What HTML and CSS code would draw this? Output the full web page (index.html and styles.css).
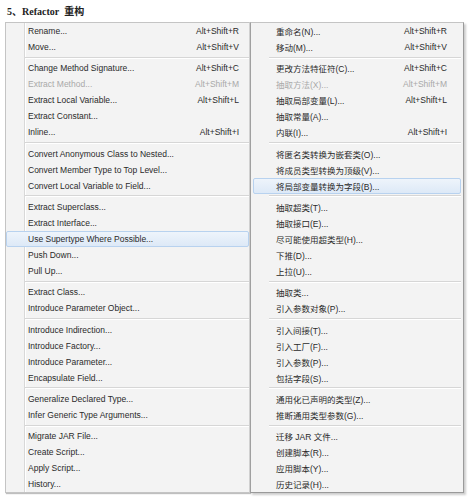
FILE: index.html
```html
<!DOCTYPE html>
<html>
<head>
<meta charset="utf-8">
<link rel="stylesheet" href="styles.css">
</head>
<body>
<div class="title">5、Refactor&nbsp;&nbsp;重构</div>
<div class="menus">
  <div class="menu menu-en">
    <div class="item"><span>Rename...</span><span class="key">Alt+Shift+R</span></div>
    <div class="item"><span>Move...</span><span class="key">Alt+Shift+V</span></div>
    <div class="sep"></div>
    <div class="item"><span>Change Method Signature...</span><span class="key">Alt+Shift+C</span></div>
    <div class="item off"><span>Extract Method...</span><span class="key">Alt+Shift+M</span></div>
    <div class="item"><span>Extract Local Variable...</span><span class="key">Alt+Shift+L</span></div>
    <div class="item"><span>Extract Constant...</span></div>
    <div class="item"><span>Inline...</span><span class="key">Alt+Shift+I</span></div>
    <div class="sep wide"></div>
    <div class="item"><span>Convert Anonymous Class to Nested...</span></div>
    <div class="item"><span>Convert Member Type to Top Level...</span></div>
    <div class="item"><span>Convert Local Variable to Field...</span></div>
    <div class="sep"></div>
    <div class="item"><span>Extract Superclass...</span></div>
    <div class="item"><span>Extract Interface...</span></div>
    <div class="item hl"><span>Use Supertype Where Possible...</span></div>
    <div class="item"><span>Push Down...</span></div>
    <div class="item"><span>Pull Up...</span></div>
    <div class="sep"></div>
    <div class="item"><span>Extract Class...</span></div>
    <div class="item"><span>Introduce Parameter Object...</span></div>
    <div class="sep"></div>
    <div class="item"><span>Introduce Indirection...</span></div>
    <div class="item"><span>Introduce Factory...</span></div>
    <div class="item"><span>Introduce Parameter...</span></div>
    <div class="item"><span>Encapsulate Field...</span></div>
    <div class="sep"></div>
    <div class="item"><span>Generalize Declared Type...</span></div>
    <div class="item"><span>Infer Generic Type Arguments...</span></div>
    <div class="sep wide"></div>
    <div class="item"><span>Migrate JAR File...</span></div>
    <div class="item"><span>Create Script...</span></div>
    <div class="item"><span>Apply Script...</span></div>
    <div class="item"><span>History...</span></div>
  </div>
  <div class="menu menu-zh">
    <div class="item"><span>重命名(N)...</span><span class="key">Alt+Shift+R</span></div>
    <div class="item"><span>移动(M)...</span><span class="key">Alt+Shift+V</span></div>
    <div class="sep"></div>
    <div class="item"><span>更改方法特征符(C)...</span><span class="key">Alt+Shift+C</span></div>
    <div class="item off"><span>抽取方法(X)...</span><span class="key">Alt+Shift+M</span></div>
    <div class="item"><span>抽取局部变量(L)...</span><span class="key">Alt+Shift+L</span></div>
    <div class="item"><span>抽取常量(A)...</span></div>
    <div class="item"><span>内联(I)...</span><span class="key">Alt+Shift+I</span></div>
    <div class="sep wide"></div>
    <div class="item"><span>将匿名类转换为嵌套类(O)...</span></div>
    <div class="item"><span>将成员类型转换为顶级(V)...</span></div>
    <div class="item hl"><span>将局部变量转换为字段(B)...</span></div>
    <div class="sep"></div>
    <div class="item"><span>抽取超类(T)...</span></div>
    <div class="item"><span>抽取接口(E)...</span></div>
    <div class="item"><span>尽可能使用超类型(H)...</span></div>
    <div class="item"><span>下推(D)...</span></div>
    <div class="item"><span>上拉(U)...</span></div>
    <div class="sep"></div>
    <div class="item"><span>抽取类...</span></div>
    <div class="item"><span>引入参数对象(P)...</span></div>
    <div class="sep"></div>
    <div class="item"><span>引入间接(T)...</span></div>
    <div class="item"><span>引入工厂(F)...</span></div>
    <div class="item"><span>引入参数(P)...</span></div>
    <div class="item"><span>包括字段(S)...</span></div>
    <div class="sep"></div>
    <div class="item"><span>通用化已声明的类型(Z)...</span></div>
    <div class="item"><span>推断通用类型参数(G)...</span></div>
    <div class="sep wide"></div>
    <div class="item"><span>迁移 JAR 文件...</span></div>
    <div class="item"><span>创建脚本(R)...</span></div>
    <div class="item"><span>应用脚本(Y)...</span></div>
    <div class="item"><span>历史记录(H)...</span></div>
  </div>
</div>
</body>
</html>
```
FILE: styles.css
```css
html, body {
  margin: 0;
  padding: 0;
  background: #ffffff;
}
body {
  width: 474px;
  height: 499px;
  overflow: hidden;
}
.title {
  height: 22px;
  line-height: 24px;
  padding-left: 7px;
  font-family: "Liberation Serif", "Noto Sans CJK SC", serif;
  font-size: 10px;
  font-weight: bold;
  color: #222;
}
.menus {
  display: flex;
  align-items: flex-start;
  padding-left: 5px;
}
.menu {
  box-sizing: border-box;
  background: #f3f3f3;
  border: 1px solid #c4c4c4;
  font-family: "Liberation Sans", "Noto Sans CJK SC", sans-serif;
  font-size: 8.5px;
  color: #2a2a2a;
  box-shadow: 1px 1px 1px rgba(0,0,0,0.25);
}
.menu-en {
  width: 245px;
  background-image: linear-gradient(to right, transparent 18px, #d8d8d8 18px, #d8d8d8 19px, #ffffff 19px, #ffffff 20px, transparent 20px);
  border-right-color: #d0d0d0;
}
.menu-zh {
  width: 214px;
  border-left-color: #a0a0a0;
  border-right-color: #9a9a9a;
  border-bottom-color: #9a9a9a;
  box-shadow: 2px 2px 2px rgba(0,0,0,0.2);
}
.item {
  box-sizing: border-box;
  height: 16px;
  display: flex;
  align-items: center;
  justify-content: space-between;
  white-space: nowrap;
  border: 1px solid transparent;
  border-radius: 2px;
}
.menu-en .item {
  padding: 0 9px 0 21px;
}
.menu-zh .item {
  padding: 0 13px 0 24px;
  margin: 0 2px;
}
.menu-zh .item {
  padding-left: 22px;
}
.item.off {
  color: #a9a9a9;
}
.item.hl {
  background: linear-gradient(to bottom, #eef4fb, #dde9f7);
  border-color: #b8d2ef;
}
.sep {
  height: 5.3px;
  display: flex;
  align-items: center;
}
.sep.wide {
  height: 5.4px;
}
.sep::before {
  content: "";
  display: block;
  flex: 1;
  height: 1px;
  background: #d6d6d6;
  border-bottom: 1px solid #ffffff;
}
.menu-en .sep::before {
  margin-left: 19px;
}
.menu-zh .sep::before {
  margin-left: 18px;
  margin-right: 2px;
}
```
